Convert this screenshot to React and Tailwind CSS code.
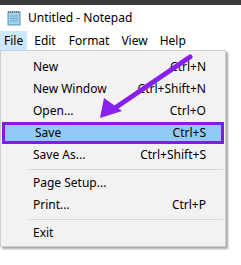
const items = [
  {label: "New", key: "Ctrl+N"},
  {label: "New Window", key: "Ctrl+Shift+N"},
  {label: "Open...", key: "Ctrl+O"},
  {label: "Save", key: "Ctrl+S", active: true},
  {label: "Save As...", key: "Ctrl+Shift+S"},
  {sep: true},
  {label: "Page Setup...", key: ""},
  {label: "Print...", key: "Ctrl+P"},
  {sep: true},
  {label: "Exit", key: ""},
];

const NotepadIcon = () => (
  <svg width="16" height="16" viewBox="0 0 16 16">
    <rect x="2" y="2" width="12" height="13" fill="#9fd3ee" stroke="#5b8fb0" strokeWidth="1"/>
    <path d="M2 2 L14 2" stroke="#777" strokeWidth="2" strokeDasharray="1 1"/>
    <path d="M4 6 H12 M4 8.5 H12 M4 11 H12" stroke="#6aa6c8" strokeWidth="1"/>
  </svg>
);

export default function App() {
  return (
    <div className="relative w-[241px] h-[265px] bg-white overflow-hidden font-['Noto_Sans',sans-serif] text-[12px] text-black">
      <div className="h-[5px] bg-[#3a3a3a]"/>
      <div className="h-[26px] flex items-center pl-[6px] gap-[6px]">
        <NotepadIcon/>
        <span>Untitled - Notepad</span>
      </div>
      <div className="h-[19px] flex items-center">
        <span className="h-full px-[4px] flex items-center bg-[#cce8ff]">File</span>
        <span className="px-[7px]">Edit</span>
        <span className="px-[6px]">Format</span>
        <span className="px-[6px]">View</span>
        <span className="px-[6px]">Help</span>
      </div>
      <div className="w-[226px] bg-[#f2f2f2] border border-[#cfcfcf] shadow-[2px_2px_2px_rgba(0,0,0,0.35)] pt-[5px] pb-[2px]">
        {items.map((it, i) =>
          it.sep ? (
            <div key={i} className="h-[6px] flex items-center pl-[28px] pr-[2px]">
              <div className="h-px w-full bg-[#d7d7d7]"/>
            </div>
          ) : (
            <div
              key={i}
              className={
                it.active
                  ? "h-[22px] mx-[1px] flex items-center justify-between pl-[30px] pr-[15px] bg-[#91c9f7] border-[3px] border-[#7e1fe0]"
                  : "h-[22px] flex items-center justify-between pl-[32px] pr-[19px]"
              }
            >
              <span>{it.label}</span>
              <span>{it.key}</span>
            </div>
          )
        )}
      </div>
      <svg className="absolute left-0 top-0" width="241" height="265" viewBox="0 0 241 265">
        <line x1="190" y1="57" x2="112" y2="110" stroke="#8a1ff0" strokeWidth="5" strokeLinecap="round"/>
        <polygon points="100,118 104,98 122,111" fill="#8a1ff0"/>
      </svg>
    </div>
  );
}
